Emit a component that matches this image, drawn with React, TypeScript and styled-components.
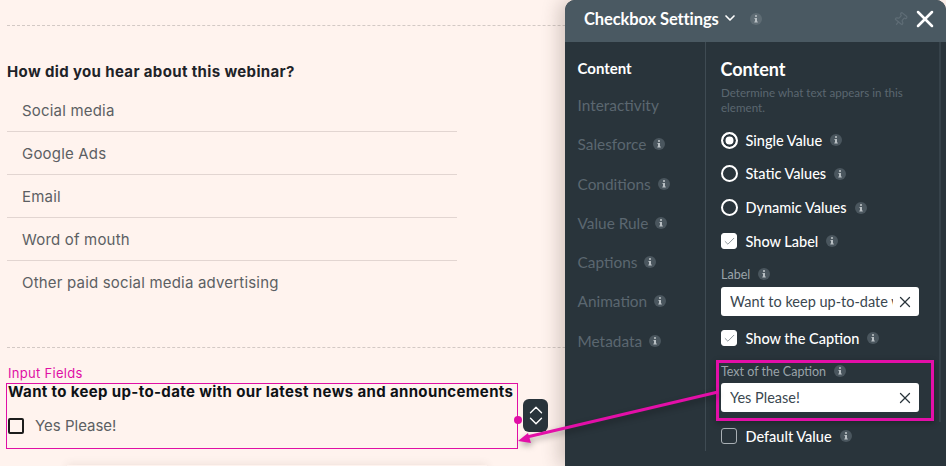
import React from 'react';
import styled, { createGlobalStyle } from 'styled-components';
import { ChevronDown, ChevronUp, Pin, X, Check } from 'lucide-react';

const GlobalStyle = createGlobalStyle`
  html, body {
    margin: 0;
    padding: 0;
    width: 946px;
    height: 466px;
    overflow: hidden;
    background: #fff3ee;
  }
`;

const Page = styled.div`
  position: relative;
  width: 946px;
  height: 466px;
  overflow: hidden;
  background: #fff3ee;
  font-family: 'Inter', 'Liberation Sans', sans-serif;
`;

const Form = styled.div`
  display: flex;
  flex-direction: column;
  padding: 25px 0 0 7px;
`;

const Dashed = styled.div`
  height: 0;
  border-top: 1px dashed #d3c9c5;
`;

const Question = styled.div`
  margin-top: 36px;
  font-size: 15px;
  line-height: 20px;
  font-weight: 700;
  letter-spacing: 0.36px;
  color: #1e2328;
`;

const Options = styled.div`
  width: 450px;
  margin-top: 7px;
  margin-bottom: 44px;
`;

const Option = styled.div`
  height: 42px;
  line-height: 44px;
  padding-left: 15px;
  font-size: 15px;
  letter-spacing: 0.19px;
  color: #5c5f63;
  border-bottom: 1px solid #e2d5d1;

  &:last-child {
    border-bottom: none;
  }
`;

const SectionName = styled.div`
  margin: 16px 0 0 1px;
  font-size: 13px;
  letter-spacing: 0.3px;
  line-height: 18px;
  color: #e00fa5;
`;

const Selected = styled.div`
  box-sizing: border-box;
  width: 512px;
  height: 66px;
  margin-left: -1px;
  margin-top: 1px;
  border: 1px solid #e00fa5;
  padding: 1px 0 0 1px;
`;

const FieldLabel = styled.div`
  font-size: 15px;
  line-height: 14px;
  font-weight: 700;
  letter-spacing: 0.36px;
  white-space: nowrap;
  color: #0e1216;
`;

const CaptionRow = styled.div`
  display: flex;
  align-items: center;
  gap: 11px;
  margin-top: 17px;
  font-size: 15px;
  color: #5c5f63;
`;

const Box = styled.div`
  box-sizing: border-box;
  width: 16px;
  height: 16px;
  border: 2px solid #1c1c1c;
  border-radius: 2px;
`;

const NextBlock = styled.div`
  width: 420px;
  height: 10px;
  margin: 16px 0 0 60px;
  box-shadow: 0 -1px 8px rgba(90, 70, 60, 0.1);
`;

const Handle = styled.div`
  position: absolute;
  left: 514px;
  top: 416px;
  width: 8px;
  height: 8px;
  border-radius: 50%;
  background: #e00fa5;
`;

const Stepper = styled.div`
  position: absolute;
  left: 523px;
  top: 399px;
  width: 25px;
  height: 33px;
  border-radius: 6px;
  background: #29343b;
  color: #fff;
  display: flex;
  flex-direction: column;
  align-items: center;
  justify-content: center;
  line-height: 0;

  svg + svg {
    margin-top: -11px;
  }
`;

const Panel = styled.aside`
  position: absolute;
  left: 565px;
  top: 0;
  width: 381px;
  height: 466px;
  display: flex;
  flex-direction: column;
  border-radius: 10px 10px 0 0;
  background: #29343b;
  box-shadow: -6px 0 18px rgba(60, 40, 30, 0.22);
  font-family: 'Lato', 'Liberation Sans', sans-serif;
  overflow: hidden;
`;

const PanelHeader = styled.header`
  box-sizing: border-box;
  height: 42px;
  flex: none;
  display: flex;
  align-items: center;
  padding: 0 7px 4px 19px;
  background: #4a5962;
  color: #fff;
`;

const PanelTitle = styled.div`
  font-size: 16.5px;
  font-weight: 700;
  letter-spacing: -0.1px;
`;

const TitleChevron = styled(ChevronDown)`
  margin-left: 3px;
  margin-top: -3px;
`;

const HeaderInfo = styled.div`
  margin-left: 12px;
  display: flex;
`;

const HeaderActions = styled.div`
  margin-left: auto;
  display: flex;
  align-items: center;
  gap: 3px;
`;

const PinIcon = styled(Pin)`
  color: #5e6c75;
  transform: rotate(40deg);
`;

const PanelBody = styled.div`
  flex: 1;
  display: grid;
  grid-template-columns: 141px 1fr;
  min-height: 0;
`;

const Nav = styled.nav`
  padding: 16px 0 0 12.5px;
  height: 409px;
  box-sizing: border-box;
  border-right: 1px solid #3f4b53;
`;

const NavItem = styled.div<{ $active?: boolean }>`
  display: flex;
  align-items: center;
  gap: 7px;
  height: 20px;
  margin-bottom: ${p => (p.$active ? 17 : 19.25)}px;
  font-size: ${p => (p.$active ? 15 : 15.4)}px;
  font-weight: ${p => (p.$active ? 700 : 400)};
  color: ${p => (p.$active ? '#fff' : '#5b6770')};
`;

const Content = styled.section`
  padding: 15px 0 0 15px;
  width: 215px;
`;

const ContentTitle = styled.h2`
  margin: 0 0 0 -0.5px;
  font-size: 18px;
  line-height: 24px;
  font-weight: 700;
  color: #fff;
`;

const ContentHint = styled.p`
  margin: 5px 0 16px;
  font-size: 11.6px;
  line-height: 14.5px;
  color: #5b6770;
`;

const OptionRow = styled.div`
  display: flex;
  align-items: center;
  height: 18px;
  margin-bottom: 15.8px;
  font-size: 14.5px;
  font-weight: 500;
  color: #fff;
`;

const Radio = styled.span<{ $on?: boolean }>`
  box-sizing: border-box;
  width: 17px;
  height: 17px;
  border-radius: 50%;
  border: 2px solid #fff;
  margin-right: 7.5px;
  background: ${p => (p.$on ? '#fff' : 'transparent')};
  box-shadow: ${p => (p.$on ? 'inset 0 0 0 2.5px #29343b' : 'none')};
`;

const Tick = styled.span<{ $on?: boolean }>`
  box-sizing: border-box;
  width: 16px;
  height: 16px;
  border-radius: 3px;
  margin-right: 8.5px;
  display: flex;
  align-items: center;
  justify-content: center;
  color: #7c868c;
  background: ${p => (p.$on ? '#fff' : 'transparent')};
  border: 1px solid ${p => (p.$on ? '#fff' : '#a9b0b5')};
`;

const RowInfo = styled.span`
  display: flex;
  margin-left: 8px;
`;

const InputLabel = styled.div`
  display: flex;
  align-items: center;
  gap: 8px;
  height: 18px;
  font-size: 12.5px;
  color: #9aa3a9;
`;

const TextInput = styled.div`
  box-sizing: border-box;
  display: flex;
  align-items: center;
  justify-content: space-between;
  width: 198px;
  height: 29px;
  margin-top: 4px;
  padding: 0 5px 0 9px;
  border-radius: 3px;
  background: #fff;
`;

const InputField = styled.input`
  width: 163px;
  border: none;
  outline: none;
  padding: 0;
  background: transparent;
  font-family: inherit;
  font-size: 14.5px;
  color: #3a4750;
`;

const LabelGroup = styled.div`
  margin: -1px 0 13px;
`;

const CaptionGroup = styled.div`
  margin-top: -0.5px;
  margin-bottom: 15px;

  ${TextInput} {
    margin-top: 3px;
  }
`;

const Scrollbar = styled.div`
  position: absolute;
  right: 5px;
  top: 42px;
  width: 2px;
  height: 380px;
  background: #36424a;
`;

const Highlight = styled.div`
  position: absolute;
  left: 716px;
  top: 360px;
  width: 218px;
  height: 61px;
  box-sizing: border-box;
  border: 3px solid #e30fa8;
  box-shadow: 0 2px 6px rgba(0, 0, 0, 0.3);
`;

const ArrowLayer = styled.svg`
  position: absolute;
  left: 0;
  top: 0;
  filter: drop-shadow(1px 3px 3px rgba(0, 0, 0, 0.35));
`;

const InfoDot = ({ header }: { header?: boolean }) => (
  <svg width="12" height="12" viewBox="0 0 12 12">
    <circle cx="6" cy="6" r="6" fill={header ? '#5f6c74' : '#4a565e'} />
    <rect x="5" y="2.2" width="2" height="1.6" fill="#b8bfc3" />
    <path d="M4.5 5h2.5v3.6h.8v1H4.3v-1H5V6h-.5z" fill="#b8bfc3" />
  </svg>
);

const navItems = [
  { name: 'Interactivity', info: false },
  { name: 'Salesforce', info: true },
  { name: 'Conditions', info: true },
  { name: 'Value Rule', info: true },
  { name: 'Captions', info: true },
  { name: 'Animation', info: true },
  { name: 'Metadata', info: true },
];

const answers = ['Social media', 'Google Ads', 'Email', 'Word of mouth', 'Other paid social media advertising'];

const App: React.FC = () => (
  <Page>
    <GlobalStyle />
    <Form>
      <Dashed />
      <Question>How did you hear about this webinar?</Question>
      <Options>
        {answers.map(a => (
          <Option key={a}>{a}</Option>
        ))}
      </Options>
      <Dashed />
      <SectionName>Input Fields</SectionName>
      <Selected>
        <FieldLabel>Want to keep up-to-date with our latest news and announcements</FieldLabel>
        <CaptionRow>
          <Box />
          Yes Please!
        </CaptionRow>
      </Selected>
      <NextBlock />
    </Form>

    <Handle />
    <Stepper>
      <ChevronUp size={24} strokeWidth={1.5} />
      <ChevronDown size={24} strokeWidth={1.5} />
    </Stepper>

    <Panel>
      <PanelHeader>
        <PanelTitle>Checkbox Settings</PanelTitle>
        <TitleChevron size={16} strokeWidth={2.5} />
        <HeaderInfo>
          <InfoDot header />
        </HeaderInfo>
        <HeaderActions>
          <PinIcon size={15} />
          <X size={28} strokeWidth={2.2} />
        </HeaderActions>
      </PanelHeader>
      <PanelBody>
        <Nav>
          <NavItem $active>Content</NavItem>
          {navItems.map(n => (
            <NavItem key={n.name}>
              {n.name}
              {n.info && <InfoDot />}
            </NavItem>
          ))}
        </Nav>
        <Content>
          <ContentTitle>Content</ContentTitle>
          <ContentHint>Determine what text appears in this element.</ContentHint>
          <OptionRow>
            <Radio $on />
            Single Value
            <RowInfo><InfoDot /></RowInfo>
          </OptionRow>
          <OptionRow>
            <Radio />
            Static Values
            <RowInfo><InfoDot /></RowInfo>
          </OptionRow>
          <OptionRow>
            <Radio />
            Dynamic Values
            <RowInfo><InfoDot /></RowInfo>
          </OptionRow>
          <OptionRow>
            <Tick $on><Check size={13} strokeWidth={1.6} /></Tick>
            Show Label
            <RowInfo><InfoDot /></RowInfo>
          </OptionRow>
          <LabelGroup>
            <InputLabel>Label <InfoDot /></InputLabel>
            <TextInput>
              <InputField readOnly value="Want to keep up-to-date with our latest news and announcements" />
              <X size={18} strokeWidth={1.7} color="#29343b" />
            </TextInput>
          </LabelGroup>
          <OptionRow>
            <Tick $on><Check size={13} strokeWidth={1.6} /></Tick>
            Show the Caption
            <RowInfo><InfoDot /></RowInfo>
          </OptionRow>
          <CaptionGroup>
            <InputLabel>Text of the Caption <InfoDot /></InputLabel>
            <TextInput>
              <InputField readOnly value="Yes Please!" />
              <X size={18} strokeWidth={1.7} color="#29343b" />
            </TextInput>
          </CaptionGroup>
          <OptionRow>
            <Tick />
            Default Value
            <RowInfo><InfoDot /></RowInfo>
          </OptionRow>
        </Content>
      </PanelBody>
      <Scrollbar />
    </Panel>

    <Highlight />
    <ArrowLayer width="946" height="466" viewBox="0 0 946 466">
      <path d="M718 392 L527 437" stroke="#e30fa8" strokeWidth="3" fill="none" />
      <path d="M518 441 L528 433 L531 443 Z" fill="#e30fa8" />
    </ArrowLayer>
  </Page>
);

export default App;
